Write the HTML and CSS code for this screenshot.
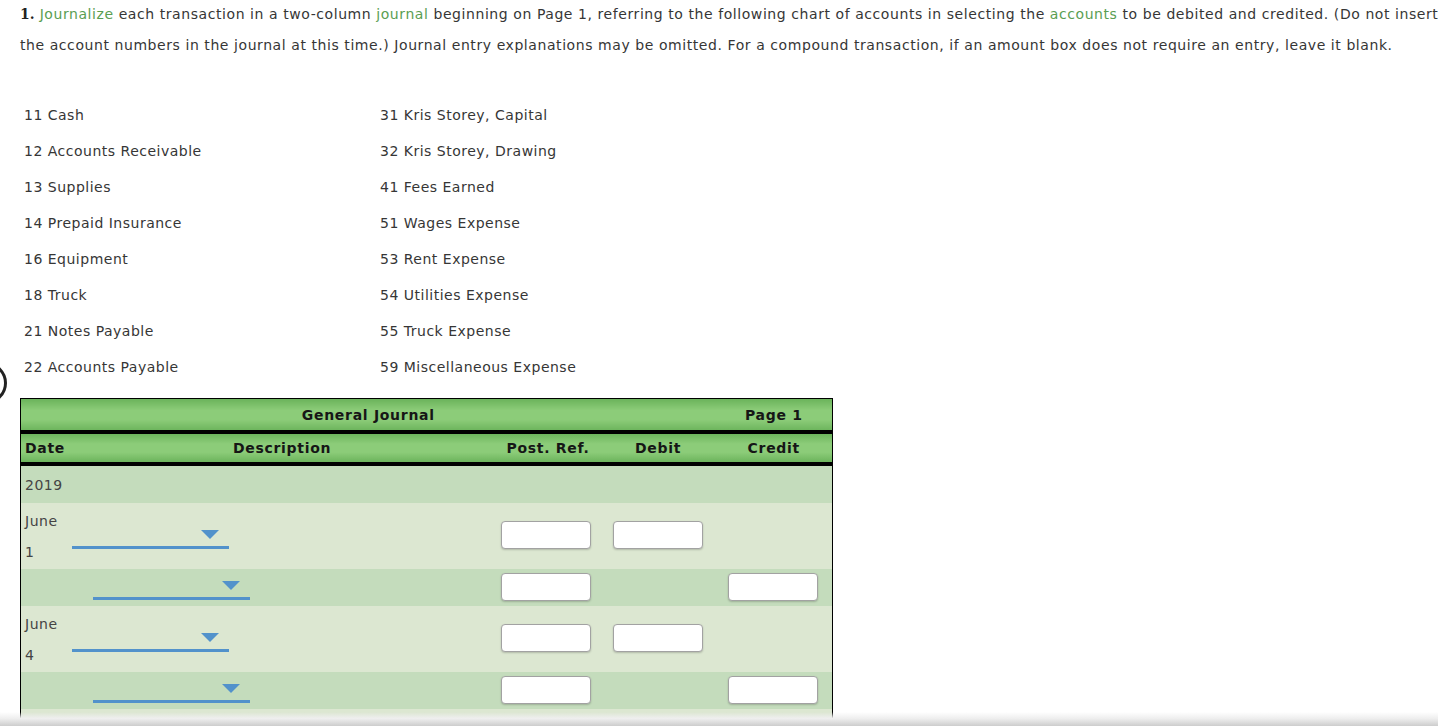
FILE: index.html
```html
<!DOCTYPE html>
<html lang="en">
<head>
  <meta charset="UTF-8">
  <title>Journal Entries</title>
  <link rel="stylesheet" href="styles.css">
</head>
<body>
  <span class="edge-circle"></span>

  <p class="question">
    <span class="line"><b class="num">1.</b> <a class="term">Journalize</a> each transaction in a two-column <a class="term">journal</a> beginning on Page 1, referring to the following chart of accounts in selecting the <a class="term">accounts</a> to be debited and credited. (Do not insert</span>
    <span class="line">the account numbers in the journal at this time.) Journal entry explanations may be omitted. For a compound transaction, if an amount box does not require an entry, leave it blank.</span>
  </p>

  <div class="accounts">
    <div>11 Cash</div>
    <div>31 Kris Storey, Capital</div>
    <div>12 Accounts Receivable</div>
    <div>32 Kris Storey, Drawing</div>
    <div>13 Supplies</div>
    <div>41 Fees Earned</div>
    <div>14 Prepaid Insurance</div>
    <div>51 Wages Expense</div>
    <div>16 Equipment</div>
    <div>53 Rent Expense</div>
    <div>18 Truck</div>
    <div>54 Utilities Expense</div>
    <div>21 Notes Payable</div>
    <div>55 Truck Expense</div>
    <div>22 Accounts Payable</div>
    <div>59 Miscellaneous Expense</div>
  </div>

  <table class="journal">
    <colgroup>
      <col class="c-date">
      <col class="c-desc">
      <col class="c-ref">
      <col class="c-debit">
      <col class="c-credit">
    </colgroup>
    <thead>
      <tr class="head-title">
        <th colspan="4">General Journal</th>
        <th>Page 1</th>
      </tr>
      <tr class="head-cols">
        <th class="left">Date</th>
        <th>Description</th>
        <th>Post. Ref.</th>
        <th>Debit</th>
        <th>Credit</th>
      </tr>
    </thead>
    <tbody>
      <tr class="dark short">
        <td class="date">2019</td>
        <td></td><td></td><td></td><td></td>
      </tr>

      <tr class="light tall">
        <td class="date">June<br>1</td>
        <td class="desc"><span class="pick"></span></td>
        <td class="ref"><input type="text"></td>
        <td class="amt"><input type="text"></td>
        <td class="amt"></td>
      </tr>
      <tr class="dark short">
        <td class="date"></td>
        <td class="desc cr"><span class="pick"></span></td>
        <td class="ref"><input type="text"></td>
        <td class="amt"></td>
        <td class="amt"><input type="text"></td>
      </tr>

      <tr class="light tall">
        <td class="date">June<br>4</td>
        <td class="desc"><span class="pick"></span></td>
        <td class="ref"><input type="text"></td>
        <td class="amt"><input type="text"></td>
        <td class="amt"></td>
      </tr>
      <tr class="dark short">
        <td class="date"></td>
        <td class="desc cr"><span class="pick"></span></td>
        <td class="ref"><input type="text"></td>
        <td class="amt"></td>
        <td class="amt"><input type="text"></td>
      </tr>

      <tr class="light tall">
        <td class="date"></td>
        <td class="desc"><span class="pick"></span></td>
        <td class="ref"><input type="text"></td>
        <td class="amt"><input type="text"></td>
        <td class="amt"></td>
      </tr>
    </tbody>
  </table>

  <div class="bottom-bar"></div>
</body>
</html>
```

FILE: styles.css
```css
html, body {
  margin: 0;
  overflow: hidden;
}
body {
  font-family: "DejaVu Sans", Verdana, sans-serif;
  font-size: 14px;
  letter-spacing: 0.5px;
  color: #363636;
  background: #fff;
  height: 726px;
}
.edge-circle {
  position: absolute;
  left: -35px;
  top: 362px;
  width: 36px;
  height: 36px;
  border: 3px solid #222;
  border-radius: 50%;
}
.question {
  margin: -1px 0 0;
  padding: 0 20px;
  line-height: 31px;
  letter-spacing: 0.57px;
}
.question .line {
  display: block;
  white-space: nowrap;
}
.num {
  font-family: "DejaVu Serif", Georgia, serif;
  color: #222;
  letter-spacing: 0;
}
.term {
  color: #5a9e52;
  text-decoration: none;
}
.accounts {
  display: grid;
  grid-template-columns: 356px 356px;
  padding-left: 24px;
  margin-top: 36px;
  line-height: 36px;
}
.journal {
  margin: 13px 0 0 20px;
  width: 812px;
  border-collapse: collapse;
  table-layout: fixed;
  border-left: 1px solid #000;
  border-right: 1px solid #000;
  border-top: 1px solid #000;
}
.c-date { width: 48px; }
.c-desc { width: 427px; }
.c-ref { width: 105px; }
.c-debit { width: 115px; }
.c-credit { width: 117px; }
.journal th {
  background: linear-gradient(#6cb45c, #8ccc79 35%, #8ccc79 65%, #6cb45c);
  color: #161616;
  font-weight: bold;
  font-size: 14px;
  letter-spacing: 0.7px;
  padding: 0;
  text-align: center;
}
.journal th.left {
  text-align: left;
  padding-left: 4px;
}
.head-title th {
  height: 31px;
  border-bottom: 4px solid #000;
}
.head-cols th {
  height: 28px;
  border-bottom: 4px solid #000;
}
.journal td {
  padding: 0;
  vertical-align: middle;
}
.dark td { background: #c4dcbc; }
.light td { background: #dce7d1; }
.short td { height: 37px; }
.tall td { height: 66px; }
.journal td.date {
  padding-left: 4px;
  color: #444;
}
.journal .tall td.date {
  height: 63px;
  padding-top: 3px;
  line-height: 31px;
  vertical-align: top;
}
.journal td.desc {
  padding-left: 3px;
}
.journal td.desc.cr {
  padding-left: 24px;
}
.pick {
  display: flex;
  justify-content: flex-end;
  align-items: flex-start;
  box-sizing: border-box;
  width: 157px;
  height: 20px;
  margin-top: 5px;
  padding: 1px 10px 0 0;
  border-bottom: 3px solid #5292cb;
}
.pick::after {
  content: "";
  border-left: 9px solid transparent;
  border-right: 9px solid transparent;
  border-top: 9px solid #5292cb;
}
.journal input {
  display: block;
  box-sizing: border-box;
  width: 90px;
  height: 28px;
  margin: -2px 0 0;
  border: 1px solid #a2a2a2;
  border-radius: 4px;
  background: #fff;
  box-shadow: 0 1px 2px rgba(0, 0, 0, 0.2);
}
.ref input { margin-left: 5px; }
.amt input { margin-left: 12px; }
.bottom-bar {
  position: fixed;
  left: 0;
  right: 0;
  bottom: 0;
  height: 14px;
  background: linear-gradient(rgba(255, 255, 255, 0), #efefef 45%, #cdcdcd);
}
```
